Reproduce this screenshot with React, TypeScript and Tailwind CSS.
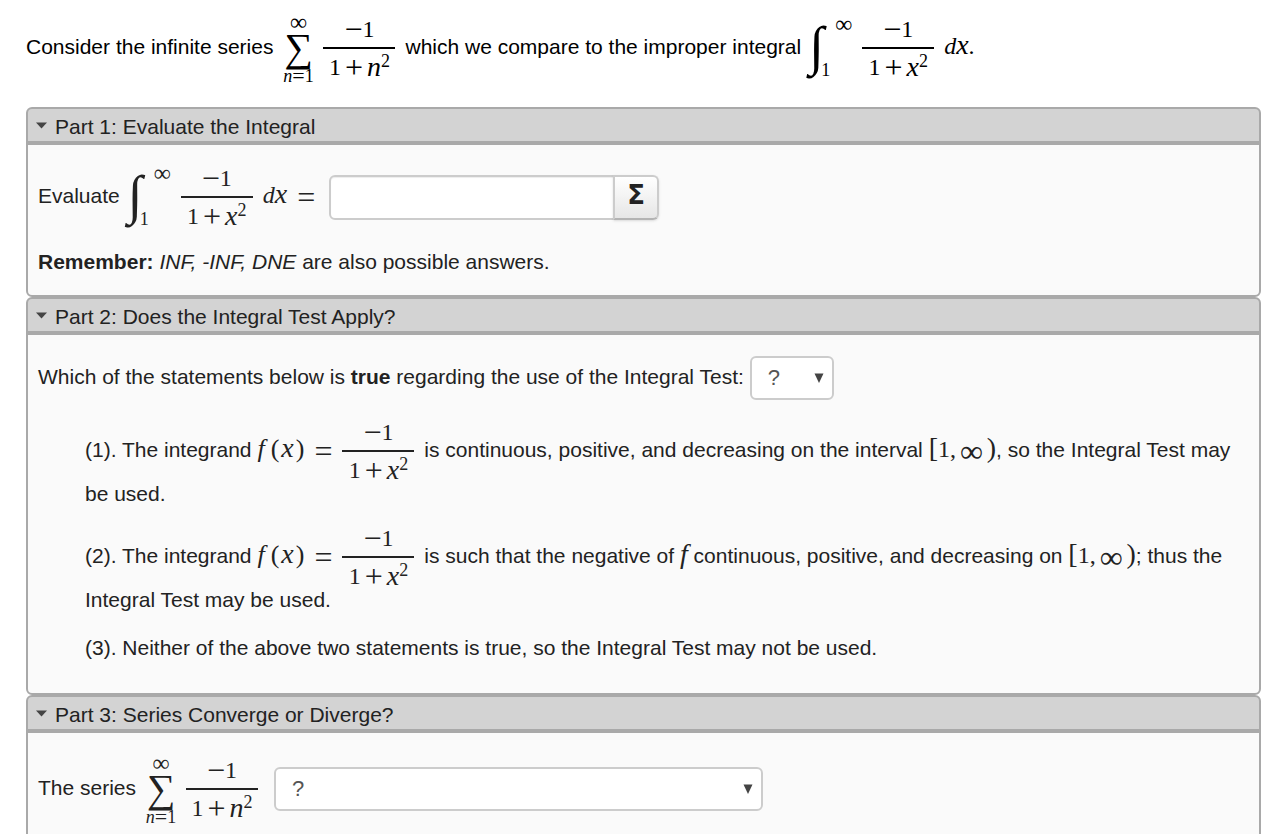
import { useState, type ReactNode } from "react";

function Fraction({ variable }: { variable: string }) {
  return (
    <span className="inline-flex w-18 flex-col items-stretch align-middle font-['Liberation_Serif',serif] text-2xl leading-6">
      <span className="flex justify-center pb-1.5">
        <span className="text-[32px]">−</span>
        <span>1</span>
      </span>
      <span className="border-t-2 border-current" />
      <span className="flex justify-center gap-1 pt-1.5">
        <span>1</span>
        <span className="text-[32px]">+</span>
        <span className="flex">
          <i className="text-[28px]">{variable}</i>
          <span className="-mt-1.5 text-lg leading-6">2</span>
        </span>
      </span>
    </span>
  );
}

function Sum() {
  return (
    <span className="mx-2 inline-flex w-[34px] flex-col items-center pt-1 align-middle font-['Liberation_Serif',serif] text-lg">
      <span className="text-2xl leading-3">∞</span>
      <span className="text-[40px] leading-10">∑</span>
      <span className="flex leading-4">
        <i>n</i>
        <span className="text-[22px]">=</span>1
      </span>
    </span>
  );
}

function Integral() {
  return (
    <span className="mx-2 inline-flex h-15 w-[45px] items-stretch align-middle font-['Liberation_Serif',serif]">
      <span className="w-3 text-[54px] leading-14">∫</span>
      <span className="flex flex-1 flex-col justify-between">
        <span className="pl-3.5 text-2xl leading-3">∞</span>
        <span className="text-lg leading-4">1</span>
      </span>
    </span>
  );
}

function MathText({ children }: { children: ReactNode }) {
  return (
    <span className="font-['Liberation_Serif',serif] text-2xl leading-6 whitespace-nowrap">
      {children}
    </span>
  );
}

function Interval() {
  return (
    <MathText>
      <span className="text-[28px] leading-6">[</span>1,
      <span className="mx-1 inline-block align-middle text-[32px] leading-6">
        ∞
      </span>
      <span className="text-[28px] leading-6">)</span>
    </MathText>
  );
}

function Equals() {
  return (
    <span className="ml-2.5 inline-block align-middle text-[32px] leading-6">
      =
    </span>
  );
}

function Integrand() {
  return (
    <>
      <MathText>
        <i className="mr-1.5 text-[26px] leading-6">f</i>
        <span className="text-[26px] leading-6">(</span>
        <i className="mx-0.5 text-[28px] leading-6">x</i>
        <span className="text-[26px] leading-6">)</span>
        <Equals />
      </MathText>
      <span className="ml-2.5">
        <Fraction variable="x" />
      </span>
      <span className="ml-1"> </span>
    </>
  );
}

function Differential() {
  return (
    <i className="ml-2.5">
      d<span className="text-[28px] leading-6">x</span>
    </i>
  );
}

function AnswerSelect({
  label,
  width,
  options,
}: {
  label: string;
  width: string;
  options: string[];
}) {
  return (
    <span className={`relative inline-block align-middle ${width}`}>
      <select
        aria-label={label}
        className="block h-11 w-full appearance-none rounded-md border-2 border-[#ccc] bg-white px-4 text-[22px] text-[#555]"
      >
        {options.map((option) => (
          <option key={option}>{option}</option>
        ))}
      </select>
      <svg
        className="pointer-events-none absolute top-[17px] right-2.5 h-2.5 w-2.5"
        viewBox="0 0 10 10"
        fill="#444"
      >
        <path d="M0.5 0.5H9.5L5 10Z" />
      </svg>
    </span>
  );
}

function Part({ title, children }: { title: string; children: ReactNode }) {
  const [open, setOpen] = useState(true);

  return (
    <section className="text-[#222]">
      <button
        type="button"
        aria-expanded={open}
        onClick={() => setOpen(!open)}
        className="flex h-9 w-full items-center gap-2 rounded-t-md border-2 border-[#a9a9a9] bg-[#d3d3d3] px-2 pt-1 text-left leading-6"
      >
        <svg className="mb-1 h-[7px] w-[11px]" viewBox="0 0 11 7" fill="#444">
          <path d="M0 0.5H11L5.5 6.5Z" />
        </svg>
        {title}
      </button>
      {open && (
        <div className="rounded-b-md border-2 border-[#a9a9a9] bg-[#fafafa] px-2.5">
          {children}
        </div>
      )}
    </section>
  );
}

export default function App() {
  return (
    <main className="bg-white pt-3 pr-[18px] pl-[26px] font-['Liberation_Sans',Arial,sans-serif] text-[21px] leading-6 text-black">
      {/* Problem statement */}
      <p className="pb-[23px]">
        Consider the infinite series
        <Sum />
        <Fraction variable="n" />
        <span className="ml-2.5">which we compare to the improper integral</span>
        <Integral />
        <Fraction variable="x" />
        <MathText>
          <Differential />.
        </MathText>
      </p>

      <Part title="Part 1: Evaluate the Integral">
        <div className="flex items-center pt-[21px]">
          <label htmlFor="integral-answer">
            Evaluate
            <Integral />
            <Fraction variable="x" />
            <MathText>
              <Differential />
              <Equals />
            </MathText>
          </label>
          <div className="ml-3.5 flex h-[45px]">
            <input
              id="integral-answer"
              type="text"
              className="w-[286px] rounded-l-md border-2 border-[#ccc] bg-white px-3 shadow-[inset_0_1px_1px_rgba(0,0,0,0.075)]"
            />
            <button
              type="button"
              aria-label="Equation editor"
              className="-ml-0.5 w-[46px] rounded-r-md border-2 border-[#ccc] border-b-[#b3b3b3] bg-linear-to-b from-white to-[#e6e6e6] pb-1 font-['DejaVu_Sans',sans-serif] text-[26px] font-bold shadow-sm"
            >
              Σ
            </button>
          </div>
        </div>
        <p className="pt-[22px] pb-[21px]">
          <b>Remember:</b> <i>INF, -INF, DNE</i> are also possible answers.
        </p>
      </Part>

      <Part title="Part 2: Does the Integral Test Apply?">
        <p className="pt-[21px]">
          Which of the statements below is <b>true</b> regarding the use of the
          Integral Test:{" "}
          <AnswerSelect
            label="Statement about the Integral Test"
            width="w-[84px]"
            options={["?", "1", "2", "3"]}
          />
        </p>
        <div className="pt-5 pr-2 pb-[33px] pl-[47px]">
          <p>
            (1). The integrand <Integrand />
            is continuous, positive, and decreasing on the interval{" "}
            <Interval />, so the Integral Test may be used.
          </p>
          <p className="mt-5">
            (2). The integrand <Integrand />
            is such that the negative of{" "}
            <MathText>
              <i className="text-[28px] leading-6">f</i>
            </MathText>{" "}
            continuous, positive, and decreasing on <Interval />; thus the
            Integral Test may be used.
          </p>
          <p className="mt-6">
            (3). Neither of the above two statements is true, so the Integral
            Test may not be used.
          </p>
        </div>
      </Part>

      <Part title="Part 3: Series Converge or Diverge?">
        <div className="flex items-center gap-4 pt-5 pb-5">
          <span>
            The series
            <Sum />
            <Fraction variable="n" />
          </span>
          <AnswerSelect
            label="Convergence of the series"
            width="w-[489px]"
            options={["?", "converges", "diverges"]}
          />
        </div>
      </Part>
    </main>
  );
}
